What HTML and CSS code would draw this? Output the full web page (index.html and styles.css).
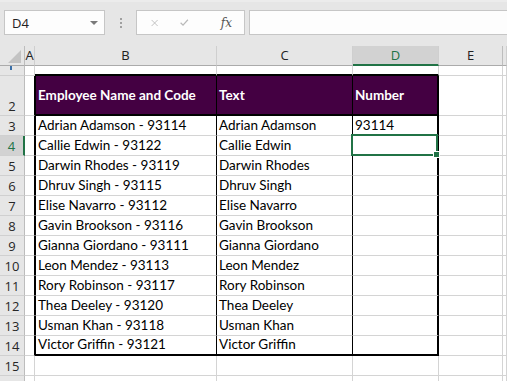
FILE: index.html
```html
<!DOCTYPE html>
<html lang="en">
<head>
    <meta charset="UTF-8">
    <title>Sheet</title>
    <link rel="stylesheet" href="styles.css">
</head>
<body>
    <div class="toolbar">
        <div class="namebox">
            <span>D4</span>
            <svg class="drop" width="8" height="4" viewBox="0 0 8 4"><path d="M0 0H8L4 4Z" fill="#7a7a7a"/></svg>
        </div>
        <div class="grip"><i></i><i></i><i></i></div>
        <div class="fbuttons">
            <svg width="12" height="12" viewBox="0 0 12 12"><path d="M1 1L11 11M11 1L1 11" stroke="#b9b9b9" stroke-width="1.4"/></svg>
            <svg width="14" height="11" viewBox="0 0 14 11"><path d="M1 6L5 10L13 1" stroke="#b9b9b9" stroke-width="2" fill="none"/></svg>
            <span class="fx">fx</span>
        </div>
        <div class="finput"></div>
    </div>

    <div class="sheet">
        <div class="row heads">
            <div class="rh corner"><svg width="14" height="14" viewBox="0 0 14 14"><path d="M13 1V14H0Z" fill="#c3c3c3"/></svg></div>
            <div class="cell a">A</div>
            <div class="cell b">B</div>
            <div class="cell c">C</div>
            <div class="cell d on">D</div>
            <div class="cell e">E</div>
            <div class="cell f"></div>
        </div>
        <div class="row r1">
            <div class="rh"><span class="tick"></span></div>
            <div class="cell a"></div>
            <div class="cell b top"></div>
            <div class="cell c top"></div>
            <div class="cell d top"></div>
            <div class="cell e"></div>
            <div class="cell f"></div>
        </div>
        <div class="row r2">
            <div class="rh">2</div>
            <div class="cell a t"></div>
            <div class="cell b t hd">Employee Name and Code</div>
            <div class="cell c t hd">Text</div>
            <div class="cell d t hd">Number</div>
            <div class="cell e"></div>
            <div class="cell f"></div>
        </div>
        <div class="row">
            <div class="rh">3</div>
            <div class="cell a t"></div>
            <div class="cell b t">Adrian Adamson - 93114</div>
            <div class="cell c t">Adrian Adamson</div>
            <div class="cell d t">93114</div>
            <div class="cell e"></div>
            <div class="cell f"></div>
        </div>
        <div class="row">
            <div class="rh on">4</div>
            <div class="cell a t"></div>
            <div class="cell b t">Callie Edwin - 93122</div>
            <div class="cell c t">Callie Edwin</div>
            <div class="cell d t sel"></div>
            <div class="cell e"></div>
            <div class="cell f"></div>
        </div>
        <div class="row">
            <div class="rh">5</div>
            <div class="cell a t"></div>
            <div class="cell b t">Darwin Rhodes - 93119</div>
            <div class="cell c t">Darwin Rhodes</div>
            <div class="cell d t"></div>
            <div class="cell e"></div>
            <div class="cell f"></div>
        </div>
        <div class="row">
            <div class="rh">6</div>
            <div class="cell a t"></div>
            <div class="cell b t">Dhruv Singh - 93115</div>
            <div class="cell c t">Dhruv Singh</div>
            <div class="cell d t"></div>
            <div class="cell e"></div>
            <div class="cell f"></div>
        </div>
        <div class="row">
            <div class="rh">7</div>
            <div class="cell a t"></div>
            <div class="cell b t">Elise Navarro - 93112</div>
            <div class="cell c t">Elise Navarro</div>
            <div class="cell d t"></div>
            <div class="cell e"></div>
            <div class="cell f"></div>
        </div>
        <div class="row">
            <div class="rh">8</div>
            <div class="cell a t"></div>
            <div class="cell b t">Gavin Brookson - 93116</div>
            <div class="cell c t">Gavin Brookson</div>
            <div class="cell d t"></div>
            <div class="cell e"></div>
            <div class="cell f"></div>
        </div>
        <div class="row">
            <div class="rh">9</div>
            <div class="cell a t"></div>
            <div class="cell b t">Gianna Giordano - 93111</div>
            <div class="cell c t">Gianna Giordano</div>
            <div class="cell d t"></div>
            <div class="cell e"></div>
            <div class="cell f"></div>
        </div>
        <div class="row">
            <div class="rh">10</div>
            <div class="cell a t"></div>
            <div class="cell b t">Leon Mendez - 93113</div>
            <div class="cell c t">Leon Mendez</div>
            <div class="cell d t"></div>
            <div class="cell e"></div>
            <div class="cell f"></div>
        </div>
        <div class="row">
            <div class="rh">11</div>
            <div class="cell a t"></div>
            <div class="cell b t">Rory Robinson - 93117</div>
            <div class="cell c t">Rory Robinson</div>
            <div class="cell d t"></div>
            <div class="cell e"></div>
            <div class="cell f"></div>
        </div>
        <div class="row">
            <div class="rh">12</div>
            <div class="cell a t"></div>
            <div class="cell b t">Thea Deeley - 93120</div>
            <div class="cell c t">Thea Deeley</div>
            <div class="cell d t"></div>
            <div class="cell e"></div>
            <div class="cell f"></div>
        </div>
        <div class="row">
            <div class="rh">13</div>
            <div class="cell a t"></div>
            <div class="cell b t">Usman Khan - 93118</div>
            <div class="cell c t">Usman Khan</div>
            <div class="cell d t"></div>
            <div class="cell e"></div>
            <div class="cell f"></div>
        </div>
        <div class="row">
            <div class="rh">14</div>
            <div class="cell a t"></div>
            <div class="cell b t last">Victor Griffin - 93121</div>
            <div class="cell c t last">Victor Griffin</div>
            <div class="cell d t last"></div>
            <div class="cell e"></div>
            <div class="cell f"></div>
        </div>
        <div class="row">
            <div class="rh">15</div>
            <div class="cell a"></div>
            <div class="cell b"></div>
            <div class="cell c"></div>
            <div class="cell d"></div>
            <div class="cell e"></div>
            <div class="cell f"></div>
        </div>
        <div class="row">
            <div class="rh"></div>
            <div class="cell a"></div>
            <div class="cell b"></div>
            <div class="cell c"></div>
            <div class="cell d"></div>
            <div class="cell e"></div>
            <div class="cell f"></div>
        </div>
    </div>
</body>
</html>
```

FILE: styles.css
```css
body {
    margin: 0;
    background-color: #ffffff;
    font-family: Lato, "Open Sans", sans-serif;
    overflow: hidden;
}

/* barre du haut : zone de nom + barre de formule */
.toolbar {
    height: 46px;
    box-sizing: border-box;
    background-color: #e6e6e6;
    border-top: 2px solid #ececec;
    display: flex;
    align-items: flex-start;
    padding: 8px 0 0 4px;
}

.namebox {
    width: 101px;
    height: 25px;
    box-sizing: border-box;
    background-color: #fdfdfd;
    border: 1px solid #c6c6c6;
    display: flex;
    align-items: center;
    justify-content: space-between;
    padding: 0 6px 0 7px;
    font-family: "Open Sans", sans-serif;
    font-size: 13px;
    color: #222;
}

.grip {
    width: 31px;
    display: flex;
    flex-direction: column;
    align-items: center;
    gap: 2px;
    padding-top: 8px;
}

.grip i {
    width: 2px;
    height: 2px;
    background-color: #a0a0a0;
}

.fbuttons {
    width: 109px;
    height: 25px;
    box-sizing: border-box;
    background-color: #fdfdfd;
    border: 1px solid #c6c6c6;
    display: flex;
    align-items: center;
    padding: 0 12px 0 14px;
    gap: 22px;
}

.fx {
    font-family: "DejaVu Serif", serif;
    font-style: italic;
    font-size: 12px;
    color: #555;
    margin-left: 10px;
}

.finput {
    flex: 1;
    height: 25px;
    box-sizing: border-box;
    margin-left: 4px;
    background-color: #fdfdfd;
    border: 1px solid #c6c6c6;
    border-right: none;
}

/* grille */
.row {
    display: flex;
    height: 20px;
}

.r1 { height: 10px; overflow: hidden; }
.r2 { height: 40px; }

.rh {
    width: 25px;
    flex-shrink: 0;
    box-sizing: border-box;
    background-color: #e6e6e6;
    border-right: 1px solid #bdbdbd;
    border-bottom: 1px solid #d0d0d0;
    display: flex;
    align-items: flex-end;
    justify-content: center;
    font-family: "Open Sans", sans-serif;
    font-size: 13px;
    line-height: 18px;
    color: #262626;
}

.r1 .rh { align-items: flex-start; }

/* le "1" de la ligne 1, coupé car la ligne est trop basse */
.tick {
    width: 2px;
    height: 4px;
    background-color: #3a6fa8;
    margin-right: 2px;
}

.rh.on {
    background-color: #d2d2d2;
    border-right: 2px solid #217346;
    color: #217346;
}

.cell {
    flex-shrink: 0;
    box-sizing: border-box;
    border-right: 1px solid #d4d4d4;
    border-bottom: 1px solid #d4d4d4;
    display: flex;
    align-items: flex-end;
    padding: 0 0 1px 2px;
    font-size: 13.5px;
    line-height: 17px;
    color: #000;
    white-space: nowrap;
    overflow: hidden;
}

.a { width: 10px; }
.b { width: 182px; }
.c { width: 136px; }
.d { width: 86px; }
.e { width: 64px; }
.f { flex: 1; }

.heads .cell,
.heads .rh {
    background-color: #e6e6e6;
    border-right: 1px solid #cfcfcf;
    border-bottom: 1px solid #ababab;
    justify-content: center;
    align-items: center;
    padding: 0;
    font-family: "Open Sans", sans-serif;
    font-size: 13px;
    color: #222;
}

.heads .rh {
    border-right-color: #bdbdbd;
    align-items: flex-end;
    justify-content: flex-end;
    padding: 0 2px 2px 0;
}

.heads .e { border-right-color: #bdbdbd; }

.heads .cell.on {
    background-color: #d2d2d2;
    border-bottom: 2px solid #217346;
    color: #217346;
}

/* bordures du tableau */
.top { border-bottom: 2px solid #000; }
.a.t { border-right-color: #000; }
.b.t { border-left: 1px solid #000; border-right-color: #000; padding-left: 2px; }
.c.t { border-right-color: #000; }
.d.t { border-right: 2px solid #000; }
.last { border-bottom: 2px solid #000; }

.hd {
    background-color: #440042;
    color: #fff;
    font-weight: bold;
    align-items: center;
    border-bottom: 2px solid #000;
    padding-bottom: 0;
}

/* cellule active */
.sel {
    position: relative;
    overflow: visible;
    z-index: 1;
}

.sel::after {
    content: "";
    position: absolute;
    top: -2px;
    left: -2px;
    right: -1px;
    bottom: -1px;
    border: 2px solid #217346;
}

.sel::before {
    content: "";
    position: absolute;
    right: -3px;
    bottom: -3px;
    width: 5px;
    height: 5px;
    background-color: #217346;
    border: 1px solid #fff;
    z-index: 2;
}
```
